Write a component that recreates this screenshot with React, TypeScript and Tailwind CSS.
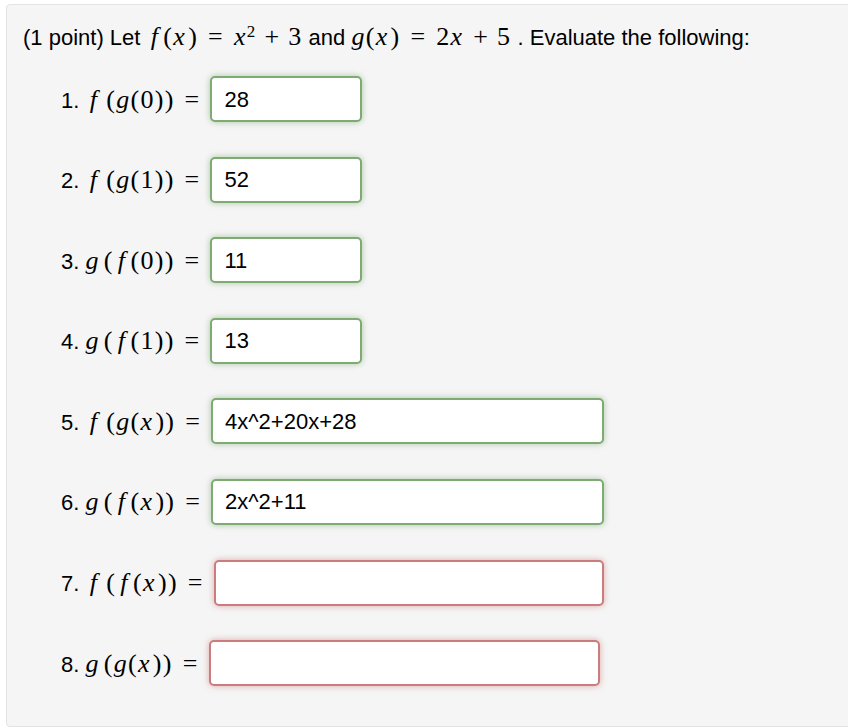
const sans = { fontFamily: '"Liberation Sans", Arial, sans-serif' };
const serif = { fontFamily: '"Liberation Serif", "Times New Roman", serif' };

// math run, sized up like MathJax output next to the sans text
function M({ children }: { children: React.ReactNode }) {
  return (
    <span className="text-[26px] tracking-[0.05em] whitespace-nowrap" style={serif}>
      {children}
    </span>
  );
}

function F() {
  return <i className="ml-[0.16em] mr-[0.16em]">f</i>;
}

function X({ tight }: { tight?: boolean }) {
  return <i className={tight ? "" : "mr-[0.08em]"}>x</i>;
}

function G() {
  return <i>g</i>;
}

function Eq() {
  return <span className="mx-[0.38em]">=</span>;
}

function Plus() {
  return <span className="mx-[0.3em]">+</span>;
}

const T = () => <span className="inline-block w-[0.15em]" />;

type Row = {
  n: number;
  label: React.ReactNode;
  value: string;
  ok: boolean;
  width: string;
};

const rows: Row[] = [
  { n: 1, label: <><F /><T />(<G />(0))<Eq /></>, value: "28", ok: true, width: "w-[152px]" },
  { n: 2, label: <><F /><T />(<G />(1))<Eq /></>, value: "52", ok: true, width: "w-[152px]" },
  { n: 3, label: <><G /><T />(<F />(0))<Eq /></>, value: "11", ok: true, width: "w-[152px]" },
  { n: 4, label: <><G /><T />(<F />(1))<Eq /></>, value: "13", ok: true, width: "w-[152px]" },
  { n: 5, label: <><F /><T />(<G />(<X />))<Eq /></>, value: "4x^2+20x+28", ok: true, width: "w-[393px]" },
  { n: 6, label: <><G /><T />(<F />(<X />))<Eq /></>, value: "2x^2+11", ok: true, width: "w-[393px]" },
  { n: 7, label: <><F /><T />(<F />(<X />))<Eq /></>, value: "", ok: false, width: "w-[390px]" },
  { n: 8, label: <><G /><T />(<G />(<X />))<Eq /></>, value: "", ok: false, width: "w-[391px]" },
];

export default function App() {
  return (
    <div className="w-[848px] h-[728px] overflow-hidden bg-white pt-[4px] pl-[6px]" style={sans}>
      <div className="w-[860px] h-[723px] bg-[#f5f5f5] border border-[#e3e3e3] rounded-[4px] pl-[16px] pt-[16px] text-black">
        <div className="text-[22px] leading-[32px] flex items-baseline whitespace-nowrap">
          <span>(1 point) Let&nbsp;</span>
          <M>
            <F />(<X />)<Eq /><X tight />
            <sup className="text-[17px]">2</sup>
            <Plus />3
          </M>
          <span>&nbsp;and&nbsp;</span>
          <M>
            <G />(<X />)<Eq />2<X />
            <Plus />5
          </M>
          <span>&nbsp;. Evaluate the following:</span>
        </div>
        <div className="flex flex-col gap-[34.6px] mt-[22px] pl-[38px]">
          {rows.map((r) => (
            <div key={r.n} className="flex items-center h-[46px]">
              <span className="text-[22px] whitespace-nowrap">
                {r.n}. <M>{r.label}</M>
              </span>
              <div
                className={`${r.width} h-[46px] bg-white rounded-[5px] border-2 flex items-center px-[12px] text-[22px] ${
                  r.ok
                    ? "border-[#7dab72] shadow-[0_0_6px_rgba(110,160,100,0.55)]"
                    : "border-[#cb7d7d] shadow-[0_0_6px_rgba(200,110,110,0.55)]"
                }`}
              >
                {r.value}
              </div>
            </div>
          ))}
        </div>
      </div>
    </div>
  );
}
